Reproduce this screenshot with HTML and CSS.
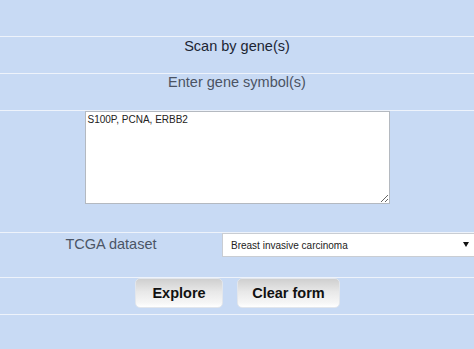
FILE: index.html
```html
<!DOCTYPE html>
<html lang="en">
<head>
    <meta charset="UTF-8">
    <title>Scan by gene(s)</title>
    <link rel="stylesheet" href="styles.css">
</head>
<body>
    <div class="form">
        <div class="row row-blank"></div>
        <div class="row row-title">Scan by gene(s)</div>
        <div class="row row-label">Enter gene symbol(s)</div>
        <div class="row row-genes">
            <textarea class="genes">S100P, PCNA, ERBB2</textarea>
        </div>
        <div class="row row-dataset">
            <div class="dataset-label">TCGA dataset</div>
            <div class="select-wrap">
                <select class="dataset">
                    <option>Breast invasive carcinoma</option>
                </select>
            </div>
        </div>
        <div class="row row-buttons">
            <button class="btn btn-explore">Explore</button>
            <button class="btn btn-clear">Clear form</button>
        </div>
        <div class="row row-end"></div>
    </div>
</body>
</html>
```

FILE: styles.css
```css
body, html {
    margin: 0;
    padding: 0;
    height: 100%;
    width: 100%;
    background: #c8daf4;
    overflow: hidden;
    font-family: 'Liberation Sans', Arial, sans-serif;
}

.form {
    display: flex;
    flex-direction: column;
}

.row {
    height: 36px;
    border-bottom: 1px solid #eef3fb;
    box-sizing: content-box;
}

.row-title {
    font-size: 14.5px;
    color: #1c2533;
    text-align: center;
    line-height: 17px;
    padding-top: 1px;
    height: 35px;
}

.row-label {
    font-size: 14.5px;
    color: #4b5363;
    text-align: center;
    line-height: 17px;
    height: 36px;
}

.row-genes {
    height: 121px;
    display: flex;
    justify-content: center;
}

.genes {
    width: 305px;
    height: 93px;
    box-sizing: border-box;
    margin: 0;
    padding: 2px 2px;
    border: 1px solid #b4b9c0;
    font-family: 'Liberation Sans', Arial, sans-serif;
    font-size: 10px;
    color: #222;
    background: #fff;
}

.row-dataset {
    height: 44px;
    display: flex;
}

.dataset-label {
    width: 222px;
    text-align: center;
    font-size: 14.5px;
    color: #4b5566;
    padding-top: 3px;
    line-height: 17px;
}

.select-wrap {
    flex: 1;
    position: relative;
    height: 24px;
}

.select-wrap::after {
    content: "";
    position: absolute;
    right: 5px;
    top: 9px;
    border-left: 3px solid transparent;
    border-right: 3px solid transparent;
    border-top: 5px solid #111;
}

.dataset {
    appearance: none;
    -webkit-appearance: none;
    width: 100%;
    height: 24px;
    margin: 0;
    padding: 0 8px;
    border: 1px solid #c9cdd3;
    border-right: none;
    background: #fff;
    font-family: 'Liberation Sans', Arial, sans-serif;
    font-size: 10px;
    color: #222;
}

.row-buttons {
    display: flex;
    justify-content: center;
    gap: 14px;
    padding-left: 1px;
}

.btn {
    height: 30px;
    margin: 0;
    padding: 0;
    white-space: nowrap;
    border: 1px solid #e2e6ec;
    border-radius: 5px;
    background: linear-gradient(#cfcfcf, #e8e8e8 45%, #f6f6f6 85%, #ffffff);
    font-family: 'Liberation Sans', Arial, sans-serif;
    font-size: 14.5px;
    font-weight: bold;
    color: #111;
}

.btn-explore {
    width: 88px;
}

.btn-clear {
    width: 103px;
}

.row-end {
    border-bottom: none;
}
```
